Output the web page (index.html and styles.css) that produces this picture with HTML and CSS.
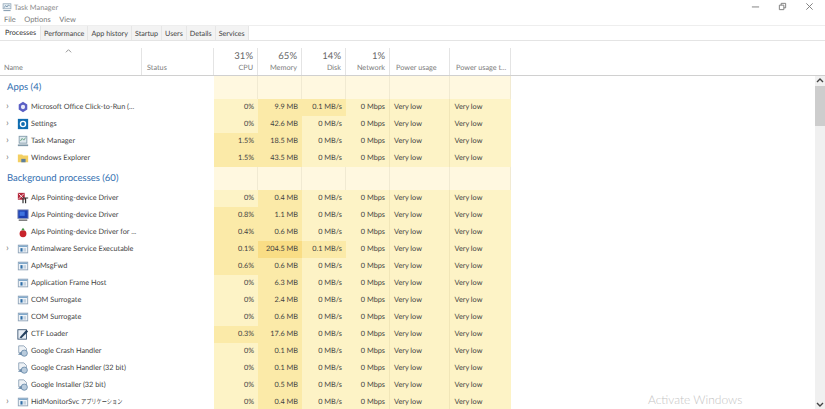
FILE: index.html
```html
<!DOCTYPE html>
<html lang="en">
<head>
<meta charset="utf-8">
<title>Task Manager</title>
<link rel="stylesheet" href="styles.css">
</head>
<body>
<svg class="defs" width="0" height="0" aria-hidden="true">
  <symbol id="i-exe" viewBox="0 0 14 12"><rect x="1.500" y="1.500" width="11" height="9" fill="#eef3f8" stroke="#8ba0b5"/><rect x="2" y="2" width="10" height="1.500" fill="#6f9cc4"/><rect x="4" y="5" width="2.500" height="4" fill="#2f6ea8"/><rect x="7.500" y="5" width="3" height="4" fill="#c4d2df"/></symbol>
  <symbol id="i-google" viewBox="0 0 14 14"><path d="M2 1h6l3 3v5H2z" fill="#eef2f6" stroke="#8ba0b5"/><circle cx="8.500" cy="9.500" r="3.600" fill="#b9cbdc" stroke="#6c8cab"/><path d="M1 11l4-3 1 4z" fill="#6c8cab"/></symbol>
</svg>
<div class="window">
  <header class="titlebar">
    <svg class="app-icon" viewBox="0 0 14 12" aria-hidden="true"><rect x="1.500" y="1.500" width="11" height="7" fill="#e5edf3" stroke="#8aa0b2"/><path d="M3 7l2-3 2 2 2-3 2 2" fill="none" stroke="#5e7f99"/><path d="M2 11h10" stroke="#8aa0b2" stroke-width="1.500"/></svg>
    <span class="title">Task Manager</span>
    <div class="controls">
      <svg viewBox="0 0 10 10" aria-hidden="true"><path d="M1 5.500h8" stroke="#777"/></svg>
      <svg viewBox="0 0 10 10" aria-hidden="true"><path d="M1.500 3.500h5v5h-5zM3.500 3.500v-2h5v5h-2" fill="none" stroke="#777"/></svg>
      <svg viewBox="0 0 10 10" aria-hidden="true"><path d="M1.500 1.500l7 7M8.500 1.500l-7 7" stroke="#777"/></svg>
    </div>
  </header>
  <nav class="menu"><span>File</span><span>Options</span><span>View</span></nav>
  <div class="tabs">
    <span class="tab active">Processes</span><span class="tab">Performance</span><span class="tab">App history</span><span class="tab">Startup</span><span class="tab">Users</span><span class="tab">Details</span><span class="tab">Services</span>
  </div>
  <div class="head row-grid">
    <div class="hc name-head"><svg class="sort" viewBox="0 0 8 4" aria-hidden="true"><path d="M1 3.500l3-3 3 3" fill="none" stroke="#888"/></svg><span>Name</span></div>
    <div class="hc"><span>Status</span></div>
    <div class="hc num"><b>31%</b><span>CPU</span></div>
    <div class="hc num"><b>65%</b><span>Memory</span></div>
    <div class="hc num"><b>14%</b><span>Disk</span></div>
    <div class="hc num"><b>1%</b><span>Network</span></div>
    <div class="hc pw"><span>Power usage</span></div>
    <div class="hc pw"><span>Power usage t...</span></div>
  </div>
  <div class="body">
    <div class="rows">
      <div class="group row-grid"><div class="gname">Apps (4)</div><i></i><i></i><i></i><i></i><i></i><i></i><i></i></div>
      <div class="row row-grid"><div class="n"><span class="chev">›</span><svg class="ico" viewBox="0 0 14 14" aria-hidden="true"><path d="M7 1l5 3v6l-5 3-5-3V4z" fill="#5a5fc4"/><circle cx="7" cy="7" r="2.500" fill="#e8eaf8"/></svg>Microsoft Office Click-to-Run (...</div><div></div><div class="c h1">0%</div><div class="c h2">9.9 MB</div><div class="c h2">0.1 MB/s</div><div class="c h1 e">0 Mbps</div><div class="p h1 e">Very low</div><div class="p h1">Very low</div></div>
      <div class="row row-grid"><div class="n"><span class="chev">›</span><svg class="ico" viewBox="0 0 14 14" aria-hidden="true"><rect x="1" y="1" width="12" height="12" fill="#0f6cb0"/><circle cx="7" cy="7" r="3" fill="none" stroke="#fff" stroke-width="1.600"/></svg>Settings</div><div></div><div class="c h1">0%</div><div class="c h2">42.6 MB</div><div class="c h1">0 MB/s</div><div class="c h1 e">0 Mbps</div><div class="p h1 e">Very low</div><div class="p h1">Very low</div></div>
      <div class="row row-grid"><div class="n"><span class="chev">›</span><svg class="ico" viewBox="0 0 14 14" aria-hidden="true"><rect x="2.500" y="1.500" width="9" height="8" fill="#dfe9ee" stroke="#7f98a8"/><path d="M4 7l2-3 2 2 2-3" fill="none" stroke="#5d9a78"/><path d="M1 12h12" stroke="#7f98a8" stroke-width="2"/></svg>Task Manager</div><div></div><div class="c h2">1.5%</div><div class="c h2">18.5 MB</div><div class="c h1">0 MB/s</div><div class="c h1 e">0 Mbps</div><div class="p h1 e">Very low</div><div class="p h1">Very low</div></div>
      <div class="row row-grid"><div class="n"><span class="chev">›</span><svg class="ico" viewBox="0 0 14 14" aria-hidden="true"><path d="M1 3h5l1 1h6v8H1z" fill="#f3cf62"/><rect x="5" y="8" width="5" height="4" fill="#5d7f9c"/></svg>Windows Explorer</div><div></div><div class="c h2">1.5%</div><div class="c h2">43.5 MB</div><div class="c h1">0 MB/s</div><div class="c h1 e">0 Mbps</div><div class="p h1 e">Very low</div><div class="p h1">Very low</div></div>
      <div class="group row-grid"><div class="gname">Background processes (60)</div><i></i><i></i><i></i><i></i><i></i><i></i><i></i></div>
      <div class="row row-grid"><div class="n"><svg class="ico" viewBox="0 0 14 14" aria-hidden="true"><rect x="1" y="1" width="8" height="8" fill="#b5283c"/><path d="M2 2l6 6M8 2l-6 6" stroke="#fff"/><path d="M7 13V7h6M10 7v6" fill="none" stroke="#333" stroke-width="1.400"/></svg>Alps Pointing-device Driver</div><div></div><div class="c h1">0%</div><div class="c h2">0.4 MB</div><div class="c h1">0 MB/s</div><div class="c h1 e">0 Mbps</div><div class="p h1 e">Very low</div><div class="p h1">Very low</div></div>
      <div class="row row-grid"><div class="n"><svg class="ico" viewBox="0 0 14 14" aria-hidden="true"><rect x="1" y="1" width="12" height="10" fill="#1c3fb0" stroke="#8793b8"/><rect x="3" y="3" width="6" height="5" fill="#3f74e0"/><path d="M2 13h10" stroke="#555" stroke-width="1.400"/></svg>Alps Pointing-device Driver</div><div></div><div class="c h2">0.8%</div><div class="c h2">1.1 MB</div><div class="c h1">0 MB/s</div><div class="c h1 e">0 Mbps</div><div class="p h1 e">Very low</div><div class="p h1">Very low</div></div>
      <div class="row row-grid"><div class="n"><svg class="ico" viewBox="0 0 14 14" aria-hidden="true"><circle cx="7" cy="9" r="4" fill="#c8242c"/><path d="M5 5l2-3 2 3z" fill="#3f8f3f"/></svg>Alps Pointing-device Driver for ...</div><div></div><div class="c h2">0.4%</div><div class="c h2">0.6 MB</div><div class="c h1">0 MB/s</div><div class="c h1 e">0 Mbps</div><div class="p h1 e">Very low</div><div class="p h1">Very low</div></div>
      <div class="row row-grid"><div class="n"><span class="chev">›</span><svg class="ico" aria-hidden="true"><use href="#i-exe"/></svg>Antimalware Service Executable</div><div></div><div class="c h2">0.1%</div><div class="c h3">204.5 MB</div><div class="c h2">0.1 MB/s</div><div class="c h1 e">0 Mbps</div><div class="p h1 e">Very low</div><div class="p h1">Very low</div></div>
      <div class="row row-grid"><div class="n"><svg class="ico" aria-hidden="true"><use href="#i-exe"/></svg>ApMsgFwd</div><div></div><div class="c h2">0.6%</div><div class="c h2">0.6 MB</div><div class="c h1">0 MB/s</div><div class="c h1 e">0 Mbps</div><div class="p h1 e">Very low</div><div class="p h1">Very low</div></div>
      <div class="row row-grid"><div class="n"><svg class="ico" aria-hidden="true"><use href="#i-exe"/></svg>Application Frame Host</div><div></div><div class="c h1">0%</div><div class="c h2">6.3 MB</div><div class="c h1">0 MB/s</div><div class="c h1 e">0 Mbps</div><div class="p h1 e">Very low</div><div class="p h1">Very low</div></div>
      <div class="row row-grid"><div class="n"><svg class="ico" aria-hidden="true"><use href="#i-exe"/></svg>COM Surrogate</div><div></div><div class="c h1">0%</div><div class="c h2">2.4 MB</div><div class="c h1">0 MB/s</div><div class="c h1 e">0 Mbps</div><div class="p h1 e">Very low</div><div class="p h1">Very low</div></div>
      <div class="row row-grid"><div class="n"><svg class="ico" aria-hidden="true"><use href="#i-exe"/></svg>COM Surrogate</div><div></div><div class="c h1">0%</div><div class="c h2">0.6 MB</div><div class="c h1">0 MB/s</div><div class="c h1 e">0 Mbps</div><div class="p h1 e">Very low</div><div class="p h1">Very low</div></div>
      <div class="row row-grid"><div class="n"><svg class="ico" viewBox="0 0 14 14" aria-hidden="true"><rect x="1" y="2" width="10" height="11" fill="#e8eef5" stroke="#34506e"/><path d="M3 11l8-9 2 2-8 8z" fill="#24405e"/></svg>CTF Loader</div><div></div><div class="c h2">0.3%</div><div class="c h2">17.6 MB</div><div class="c h1">0 MB/s</div><div class="c h1 e">0 Mbps</div><div class="p h1 e">Very low</div><div class="p h1">Very low</div></div>
      <div class="row row-grid"><div class="n"><svg class="ico" aria-hidden="true"><use href="#i-google"/></svg>Google Crash Handler</div><div></div><div class="c h1">0%</div><div class="c h2">0.1 MB</div><div class="c h1">0 MB/s</div><div class="c h1 e">0 Mbps</div><div class="p h1 e">Very low</div><div class="p h1">Very low</div></div>
      <div class="row row-grid"><div class="n"><svg class="ico" aria-hidden="true"><use href="#i-google"/></svg>Google Crash Handler (32 bit)</div><div></div><div class="c h1">0%</div><div class="c h2">0.1 MB</div><div class="c h1">0 MB/s</div><div class="c h1 e">0 Mbps</div><div class="p h1 e">Very low</div><div class="p h1">Very low</div></div>
      <div class="row row-grid"><div class="n"><svg class="ico" aria-hidden="true"><use href="#i-google"/></svg>Google Installer (32 bit)</div><div></div><div class="c h1">0%</div><div class="c h2">0.5 MB</div><div class="c h1">0 MB/s</div><div class="c h1 e">0 Mbps</div><div class="p h1 e">Very low</div><div class="p h1">Very low</div></div>
      <div class="row row-grid"><div class="n"><span class="chev">›</span><svg class="ico" aria-hidden="true"><use href="#i-exe"/></svg>HidMonitorSvc&nbsp;<span class="jp">アプリケーション</span></div><div></div><div class="c h1">0%</div><div class="c h2">0.4 MB</div><div class="c h1">0 MB/s</div><div class="c h1 e">0 Mbps</div><div class="p h1 e">Very low</div><div class="p h1">Very low</div></div>
    </div>
    <aside class="scrollbar">
      <svg viewBox="0 0 10 10" aria-hidden="true"><path d="M2 6l3-3 3 3" fill="none" stroke="#444" stroke-width="1.400"/></svg>
      <div class="thumb"></div>
      <div class="track"></div>
      <svg viewBox="0 0 10 10" aria-hidden="true"><path d="M2 4l3 3 3-3" fill="none" stroke="#444" stroke-width="1.400"/></svg>
    </aside>
  </div>
  <div class="watermark">Activate Windows</div>
</div>
</body>
</html>
```
FILE: styles.css
```css
* { box-sizing: border-box; }
html, body { margin: 0; padding: 0; height: 409px; overflow: hidden; background: #fff; }
body { font-family: Lato, "Noto Sans CJK JP", sans-serif; font-size: 7.300px; color: #3c3c3c; text-rendering: geometricPrecision; }
.defs { position: absolute; }
.window { position: relative; width: 825px; height: 409px; overflow: hidden; display: flex; flex-direction: column; }

.titlebar { height: 13px; display: flex; align-items: center; padding-left: 2px; gap: 2px; flex: none; }
.app-icon { width: 10px; height: 10px; }
.title { color: #8a8a8a; font-size: 7.300px; margin-top: 1px; }
.controls { margin-left: auto; display: flex; gap: 18px; padding-right: 11px; }
.controls svg { width: 9px; height: 9px; }

.menu { height: 13px; display: flex; gap: 8.500px; align-items: center; padding-left: 4px; color: #7a7a7a; font-size: 7.500px; flex: none; border-bottom: 1px solid #eee; }

.tabs { height: 15px; display: flex; align-items: stretch; padding-left: 1px; border-bottom: 1px solid #e4e4e4; flex: none; }
.tab { padding: 2px 3px 0; background: #f3f3f3; border-right: 1px solid #e6e6e6; font-size: 7.200px; line-height: 12px; color: #444; }
.active { background: #fff; color: #333; padding: 1px 4px 0; }

.row-grid { display: grid; grid-template-columns: 142px 72px 44px 44px 44px 44px 60px 61px; width: 511px; }

.head { height: 35px; flex: none; width: 825px; border-bottom: 1.500px solid #d0d0d0; padding-top: 7px; }
.hc { border-right: 1px solid #e4e4e4; padding: 0 3px 1px 5px; display: flex; flex-direction: column; justify-content: flex-end; color: #7b7b7b; font-size: 7.300px; line-height: 12px; position: relative; }
.name-head { padding-left: 4px; }
.sort { position: absolute; top: 1px; left: 65px; width: 7px; height: 4px; }
.num { text-align: right; padding-right: 4px; padding-left: 0; }
.num b { font-weight: 400; font-size: 9.500px; line-height: 11px; color: #666; }
.pw { padding-left: 6px; white-space: nowrap; }

.body { flex: 1; display: flex; justify-content: space-between; min-height: 0; }
.rows { width: 511px; }

.group { height: 23px; }
.gname { color: #336fb0; font-size: 9.500px; line-height: 24px; padding-left: 7px; white-space: nowrap; }
.group i { background: #fff8e0; border-right: 1px solid #f1ead2; }
.group i:first-of-type { background: #fff; border-right: 1px solid transparent; }

.row { height: 16.970px; line-height: 16.970px; color: #3f3f3f; }
.n { display: flex; align-items: center; position: relative; padding-left: 17px; white-space: nowrap; }
.jp { font-size: 7px; display: inline-block; transform: scaleX(.74); transform-origin: left center; }
.chev { position: absolute; left: 6px; top: 0; color: #888; font-size: 10px; line-height: 15px; }
.ico { width: 12px; height: 12px; margin-right: 2px; flex: none; }
.c { text-align: right; padding-right: 4px; }
.p { padding-left: 4px; }
.p.e + .p { padding-left: 4.500px; }
.e { border-right: 1px solid #f1e6b8; }
.h1 { background: #fdf3c6; }
.h2 { background: #fbeaa8; }
.h3 { background: #f9dd85; }

.scrollbar { width: 10px; background: #f0f0f0; display: flex; flex-direction: column; }
.scrollbar svg { width: 10px; height: 10px; flex: none; background: #f0f0f0; }
.thumb { height: 40px; background: #cdcdcd; flex: none; }
.track { flex: 1; }

.watermark { position: absolute; left: 648px; top: 391px; font-size: 12px; line-height: 18px; color: #c3c3c3; font-family: Lato, sans-serif; font-weight: 300; }
```
